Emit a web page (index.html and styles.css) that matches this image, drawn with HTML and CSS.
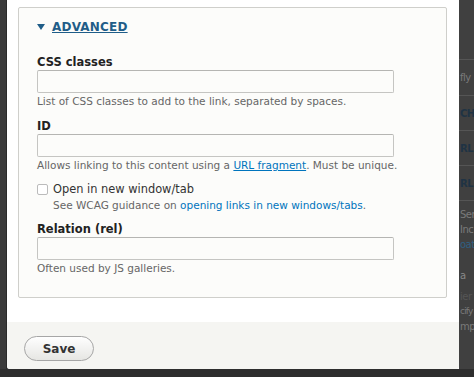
FILE: index.html
```html
<!DOCTYPE html>
<html lang="en">
<head>
	<meta charset="UTF-8">
	<title>Link settings</title>
	<link rel="stylesheet" href="styles.css">
</head>
<body>
	<div class="screen">
		<div class="edge"></div>
		<div class="dialog">
			<div class="dialog-body">
				<fieldset class="advanced">
					<div class="summary">
						<span class="arrow"></span>
						<a href="#" class="summary-link">ADVANCED</a>
					</div>
					<div class="item">
						<label class="label">CSS classes</label>
						<input type="text" class="field">
						<div class="desc">List of CSS classes to add to the link, separated by spaces.</div>
					</div>
					<div class="item">
						<label class="label">ID</label>
						<input type="text" class="field">
						<div class="desc">Allows linking to this content using a <a href="#" class="ulink">URL fragment</a>. Must be unique.</div>
					</div>
					<div class="item check">
						<label class="check-row"><span class="box"></span>Open in new window/tab</label>
						<div class="desc sub">See WCAG guidance on <a href="#" class="blink">opening links in new windows/tabs</a>.</div>
					</div>
					<div class="item">
						<label class="label">Relation (rel)</label>
						<input type="text" class="field">
						<div class="desc">Often used by JS galleries.</div>
					</div>
				</fieldset>
			</div>
			<div class="buttons">
				<button class="save">Save</button>
			</div>
		</div>
		<div class="behind">
			<div class="row r1"></div>
			<div class="row r2"><span class="t">fly</span></div>
			<div class="row r3"><span class="t dark">CH</span></div>
			<div class="row r3"><span class="t dark">RL</span></div>
			<div class="row r4"><span class="t dark">RL</span></div>
			<div class="row r5">
				<span class="t">Ser</span>
				<span class="t">Inc</span>
				<span class="t blue">oat</span>
				<span class="t gap">a</span>
				<span class="t faint">ier</span>
				<span class="t narrow">cify</span>
				<span class="t">mp</span>
			</div>
		</div>
	</div>
	<div class="bottom"></div>
</body>
</html>
```

FILE: styles.css
```css
body{
	margin: 0;
	background: #3c3c3c;
	font-family: "DejaVu Sans", sans-serif;
	width: 474px;
	height: 377px;
	overflow: hidden;
}
.screen{
	display: flex;
	height: 369px;
}
.edge{
	width: 7px;
	background: #3a3a3a;
	border-right: 1px solid #2a2a2a;
	box-sizing: border-box;
}
.dialog{
	width: 452px;
	background: #fff;
	display: flex;
	flex-direction: column;
	border-bottom-left-radius: 3px;
}
.dialog-body{
	padding: 7px 12px 0 11px;
	height: 322px;
	box-sizing: border-box;
}
.advanced{
	margin: 0;
	padding: 11px 18px 0 18px;
	height: 291px;
	box-sizing: border-box;
	border: 1px solid #cfcfcb;
	border-radius: 2px;
	background: #fcfcfa;
}
.summary{
	display: flex;
	align-items: center;
	height: 16px;
	margin-bottom: 19px;
}
.arrow{
	width: 0;
	height: 0;
	border-left: 4px solid transparent;
	border-right: 4px solid transparent;
	border-top: 6px solid #1f5d88;
	margin-right: 7px;
}
.summary-link{
	color: #1f5d88;
	font-weight: bold;
	font-size: 12px;
	letter-spacing: 0.2px;
}
.item{
	margin-bottom: 10px;
}
.label{
	display: block;
	font-weight: bold;
	font-size: 11.5px;
	color: #222;
	line-height: 16px;
	margin-top: 1px;
}
.field{
	display: block;
	width: 357px;
	height: 23px;
	box-sizing: border-box;
	border: 1px solid #c5c5c2;
	border-top-color: #b5b5b2;
	border-radius: 2px;
	background: #fcfcfa;
	margin: 0;
}
.desc{
	font-size: 10.5px;
	color: #666;
	line-height: 13px;
	margin-top: 2px;
}
.ulink{
	color: #0074bd;
}
.blink{
	color: #0074bd;
	text-decoration: none;
}
.check-row{
	display: flex;
	align-items: center;
	font-size: 11.4px;
	color: #333;
	line-height: 16px;
	margin-top: -1px;
}
.box{
	width: 11px;
	height: 11px;
	border: 1px solid #bbb;
	border-radius: 2px;
	background: #fff;
	box-sizing: border-box;
	margin-right: 5px;
}
.sub{
	margin-left: 16px;
	margin-top: 2px;
}
.check{
	margin-top: 9px;
	margin-bottom: 9px;
}
.buttons{
	height: 47px;
	background: #f5f5f2;
	display: flex;
	align-items: flex-start;
	padding: 14px 0 0 17px;
	box-sizing: border-box;
	border-bottom-left-radius: 3px;
	border-bottom-right-radius: 3px;
}
.save{
	width: 70px;
	height: 25px;
	border: 1px solid #a6a6a6;
	border-radius: 13px;
	background: linear-gradient(#fefefe, #e6e6e3);
	font-family: "DejaVu Sans", sans-serif;
	font-weight: bold;
	font-size: 12px;
	color: #333;
}
.behind{
	flex: 1;
	background: #404040;
	overflow: hidden;
	display: flex;
	flex-direction: column;
	font-size: 10px;
	letter-spacing: -0.5px;
	color: #7a7a7a;
}
.row{
	border-bottom: 1px solid #555;
	padding-left: 1px;
	display: flex;
	flex-direction: column;
}
.r1{height: 59px;}
.r2{height: 35px; justify-content: center;}
.r3{height: 34px; justify-content: center;}
.r4{height: 34px; justify-content: center;}
.r5{border: 0; padding-top: 6px; line-height: 15px;}
.t.dark{color: #1f3344; font-weight: bold;}
.t.blue{color: #2f5f80;}
.t.gap{margin-top: 16px; color: #888;}
.t.faint{color: #555; margin-top: 6px;}
.t.narrow{font-size: 9px; letter-spacing: -0.8px;}
.bottom{
	height: 8px;
	background: #2e2e2e;
}
```
